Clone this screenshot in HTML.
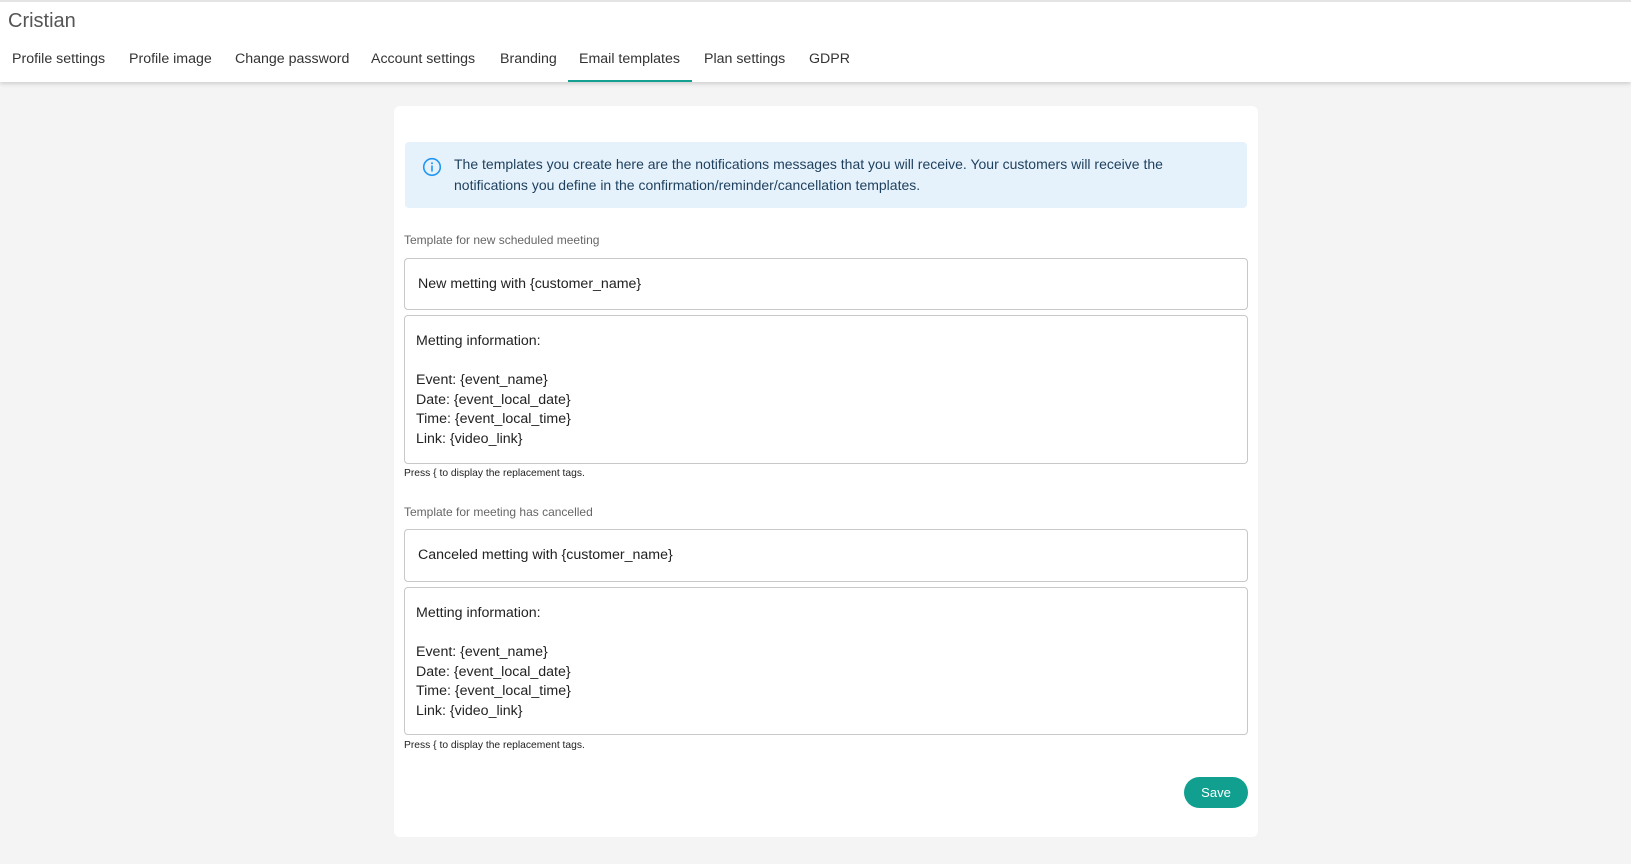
<!DOCTYPE html>
<html><head><style>
*{margin:0;padding:0;box-sizing:border-box}
body{width:1631px;height:864px;background:#f4f4f4;font-family:"Liberation Sans",Roboto,sans-serif;position:relative;overflow:hidden}
.hdr{position:absolute;left:0;top:0;width:1631px;height:82px;background:#fff;border-top:2px solid #e4e4e4;box-shadow:0 2px 4px rgba(0,0,0,.15)}
.title{position:absolute;left:8px;top:8px;font-size:20px;color:#555}
.tab{position:absolute;top:49px;font-size:14.2px;color:#333;white-space:nowrap}
.ul{position:absolute;left:568px;top:78px;width:124px;height:2px;background:#14a090}
.card{position:absolute;left:394px;top:106px;width:864px;height:731px;background:#fff;border-radius:6px}
.abs{position:absolute}
.info{left:11px;top:36px;width:842px;height:66px;background:#e6f2fb;border-radius:4px}
.info p{position:absolute;left:49px;top:12px;font-size:14px;line-height:20.5px;color:#1d3f5e;width:780px}
.lbl{font-size:12px;color:#666;left:10px}
.inp{left:10px;width:844px;border:1px solid #c8c8c8;border-radius:4px;font-size:14.2px;color:#222}
.hint{left:10px;font-size:10.3px;color:#222}
.btn{left:790px;top:671px;width:64px;height:31px;background:#11a090;border-radius:16px;color:#fff;font-size:13px;text-align:center;line-height:31px}
</style></head><body>
<div class="hdr">
<div class="title">Cristian</div>
<div class="tab" style="left:12px">Profile settings</div>
<div class="tab" style="left:129px">Profile image</div>
<div class="tab" style="left:235px">Change password</div>
<div class="tab" style="left:371px">Account settings</div>
<div class="tab" style="left:500px">Branding</div>
<div class="tab" style="left:579px">Email templates</div>
<div class="tab" style="left:704px">Plan settings</div>
<div class="tab" style="left:809px">GDPR</div>
<div class="ul"></div>
</div>
<div class="card">
<div class="abs info">
<svg class="abs" style="left:17px;top:15px" width="20" height="20" viewBox="0 0 20 20"><circle cx="10" cy="10" r="8.3" fill="none" stroke="#2196f3" stroke-width="1.6"/><rect x="9.2" y="8.5" width="1.6" height="6" fill="#2196f3"/><circle cx="10" cy="6.2" r="1" fill="#2196f3"/></svg>
<p>The templates you create here are the notifications messages that you will receive. Your customers will receive the notifications you define in the confirmation/reminder/cancellation templates.</p>
</div>
<div class="abs lbl" style="top:127px">Template for new scheduled meeting</div>
<div class="abs inp" style="top:152px;height:52px;padding:17px 0 0 13px">New metting with {customer_name}</div>
<div class="abs inp" style="top:209px;height:149px;padding:16px 0 0 11px;line-height:19.6px">Metting information:<br><br>Event: {event_name}<br>Date: {event_local_date}<br>Time: {event_local_time}<br>Link: {video_link}</div>
<div class="abs hint" style="top:362px">Press { to display the replacement tags.</div>
<div class="abs lbl" style="top:399px">Template for meeting has cancelled</div>
<div class="abs inp" style="top:423px;height:53px;padding:17px 0 0 13px">Canceled metting with {customer_name}</div>
<div class="abs inp" style="top:481px;height:148px;padding:16px 0 0 11px;line-height:19.6px">Metting information:<br><br>Event: {event_name}<br>Date: {event_local_date}<br>Time: {event_local_time}<br>Link: {video_link}</div>
<div class="abs hint" style="top:634px">Press { to display the replacement tags.</div>
<div class="abs btn">Save</div>
</div>
</body></html>
